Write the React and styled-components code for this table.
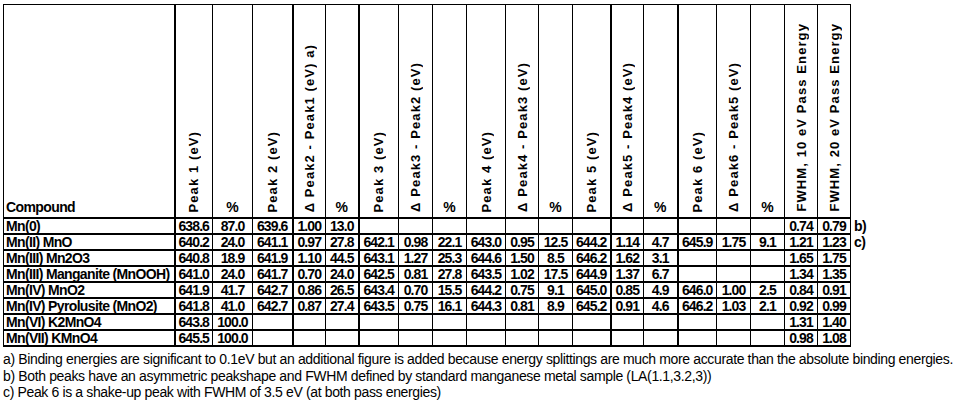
import React from "react";
import styled, { createGlobalStyle } from "styled-components";

const GlobalStyle = createGlobalStyle`
  html, body {
    margin: 0;
    padding: 0;
    background: #fff;
  }
  body {
    font-family: "Liberation Sans", Arial, sans-serif;
    color: #000;
  }
`;

const Page = styled.div`
  width: 960px;
  height: 402px;
  box-sizing: border-box;
  padding: 4px 0 0 3px;
  overflow: hidden;
`;

const Sheet = styled.table`
  border-collapse: collapse;
  table-layout: fixed;
  width: 877px;
`;

const HeadCell = styled.th`
  height: 209px;
  padding: ${(p) => (p.$left ? "0 0 3px 2px" : "0 0 3px")};
  vertical-align: bottom;
  text-align: ${(p) => (p.$left ? "left" : "center")};
  border: 1px solid #000;
  border-bottom-width: 2px;
  border-left-width: ${(p) => (p.$thick ? "2px" : "1px")};
  font-size: 14px;
  font-weight: bold;
  letter-spacing: ${(p) => (p.$left ? "-0.6px" : "0")};
  line-height: 14px;
`;

const VerticalLabel = styled.span`
  display: inline-block;
  writing-mode: vertical-rl;
  transform: rotate(180deg);
  white-space: nowrap;
  font-size: 13px;
  font-weight: bold;
  letter-spacing: 1.1px;
  line-height: 13px;
`;

const Row = styled.tr`
  height: 16px;
`;

const Cell = styled.td`
  padding: ${(p) => (p.$left ? "0 0 0 2px" : "0 1px")};
  border: 1px solid #000;
  border-top-width: 2px;
  border-bottom-width: 2px;
  border-left-width: ${(p) => (p.$thick ? "2px" : "1px")};
  text-align: ${(p) => (p.$left ? "left" : "center")};
  font-size: 14px;
  font-weight: bold;
  letter-spacing: ${(p) => (p.$left ? "-0.65px" : "-0.9px")};
  line-height: 13px;
  white-space: nowrap;
  overflow: hidden;
`;

const NoteCell = styled.td`
  padding: 0 0 0 3px;
  border: none;
  font-size: 14px;
  font-weight: bold;
  letter-spacing: -0.6px;
  line-height: 13px;
  white-space: nowrap;
`;

const Footnotes = styled.div`
  padding-top: 4px;
`;

const Footnote = styled.p`
  margin: 0;
  font-size: 14px;
  line-height: 16.5px;
  letter-spacing: -0.36px;
  white-space: nowrap;
`;

const widths = [171, 38, 40, 40, 33, 33, 40, 34, 34, 39, 33, 34, 38, 33, 34, 39, 34, 34, 33, 33, 30];
const thickCols = [1, 4, 6, 13, 15];

const headers = [
  "Peak 1 (eV)",
  "%",
  "Peak 2 (eV)",
  "\u0394 Peak2 - Peak1 (eV) a)",
  "%",
  "Peak 3 (eV)",
  "\u0394 Peak3 - Peak2 (eV)",
  "%",
  "Peak 4 (eV)",
  "\u0394 Peak4 - Peak3 (eV)",
  "%",
  "Peak 5 (eV)",
  "\u0394 Peak5 - Peak4 (eV)",
  "%",
  "Peak 6 (eV)",
  "\u0394 Peak6 - Peak5 (eV)",
  "%",
  "FWHM, 10 eV Pass Energy",
  "FWHM, 20 eV Pass Energy",
];

const e = "";
const rows = [
  { name: "Mn(0)", note: "b)", values: ["638.6", "87.0", "639.6", "1.00", "13.0", e, e, e, e, e, e, e, e, e, e, e, e, "0.74", "0.79"] },
  { name: "Mn(II) MnO", note: "c)", values: ["640.2", "24.0", "641.1", "0.97", "27.8", "642.1", "0.98", "22.1", "643.0", "0.95", "12.5", "644.2", "1.14", "4.7", "645.9", "1.75", "9.1", "1.21", "1.23"] },
  { name: "Mn(III) Mn2O3", values: ["640.8", "18.9", "641.9", "1.10", "44.5", "643.1", "1.27", "25.3", "644.6", "1.50", "8.5", "646.2", "1.62", "3.1", e, e, e, "1.65", "1.75"] },
  { name: "Mn(III) Manganite (MnOOH)", values: ["641.0", "24.0", "641.7", "0.70", "24.0", "642.5", "0.81", "27.8", "643.5", "1.02", "17.5", "644.9", "1.37", "6.7", e, e, e, "1.34", "1.35"] },
  { name: "Mn(IV) MnO2", values: ["641.9", "41.7", "642.7", "0.86", "26.5", "643.4", "0.70", "15.5", "644.2", "0.75", "9.1", "645.0", "0.85", "4.9", "646.0", "1.00", "2.5", "0.84", "0.91"] },
  { name: "Mn(IV) Pyrolusite (MnO2)", values: ["641.8", "41.0", "642.7", "0.87", "27.4", "643.5", "0.75", "16.1", "644.3", "0.81", "8.9", "645.2", "0.91", "4.6", "646.2", "1.03", "2.1", "0.92", "0.99"] },
  { name: "Mn(VI) K2MnO4", values: ["643.8", "100.0", e, e, e, e, e, e, e, e, e, e, e, e, e, e, e, "1.31", "1.40"] },
  { name: "Mn(VII) KMnO4", values: ["645.5", "100.0", e, e, e, e, e, e, e, e, e, e, e, e, e, e, e, "0.98", "1.08"] },
];

const notes = [
  "a) Binding energies are significant to 0.1eV but an additional figure is added because energy splittings are much more accurate than the absolute binding energies.",
  "b) Both peaks have an asymmetric peakshape and FWHM defined by standard manganese metal sample (LA(1.1,3.2,3))",
  "c) Peak 6 is a shake-up peak with FWHM of 3.5 eV (at both pass energies)",
];

export default function App() {
  return (
    <Page>
      <GlobalStyle />
      <Sheet>
        <colgroup>
          {widths.map((w, i) => (
            <col key={i} style={{ width: w }} />
          ))}
        </colgroup>
        <thead>
          <tr>
            <HeadCell $left>Compound</HeadCell>
            {headers.map((h, i) => (
              <HeadCell key={i} $thick={thickCols.includes(i + 1)}>
                {h === "%" ? h : <VerticalLabel>{h}</VerticalLabel>}
              </HeadCell>
            ))}
            <NoteCell />
          </tr>
        </thead>
        <tbody>
          {rows.map((r) => (
            <Row key={r.name}>
              <Cell $left>{r.name}</Cell>
              {r.values.map((v, i) => (
                <Cell key={i} $thick={thickCols.includes(i + 1)}>
                  {v}
                </Cell>
              ))}
              <NoteCell>{r.note}</NoteCell>
            </Row>
          ))}
        </tbody>
      </Sheet>
      <Footnotes>
        {notes.map((n) => (
          <Footnote key={n}>{n}</Footnote>
        ))}
      </Footnotes>
    </Page>
  );
}
